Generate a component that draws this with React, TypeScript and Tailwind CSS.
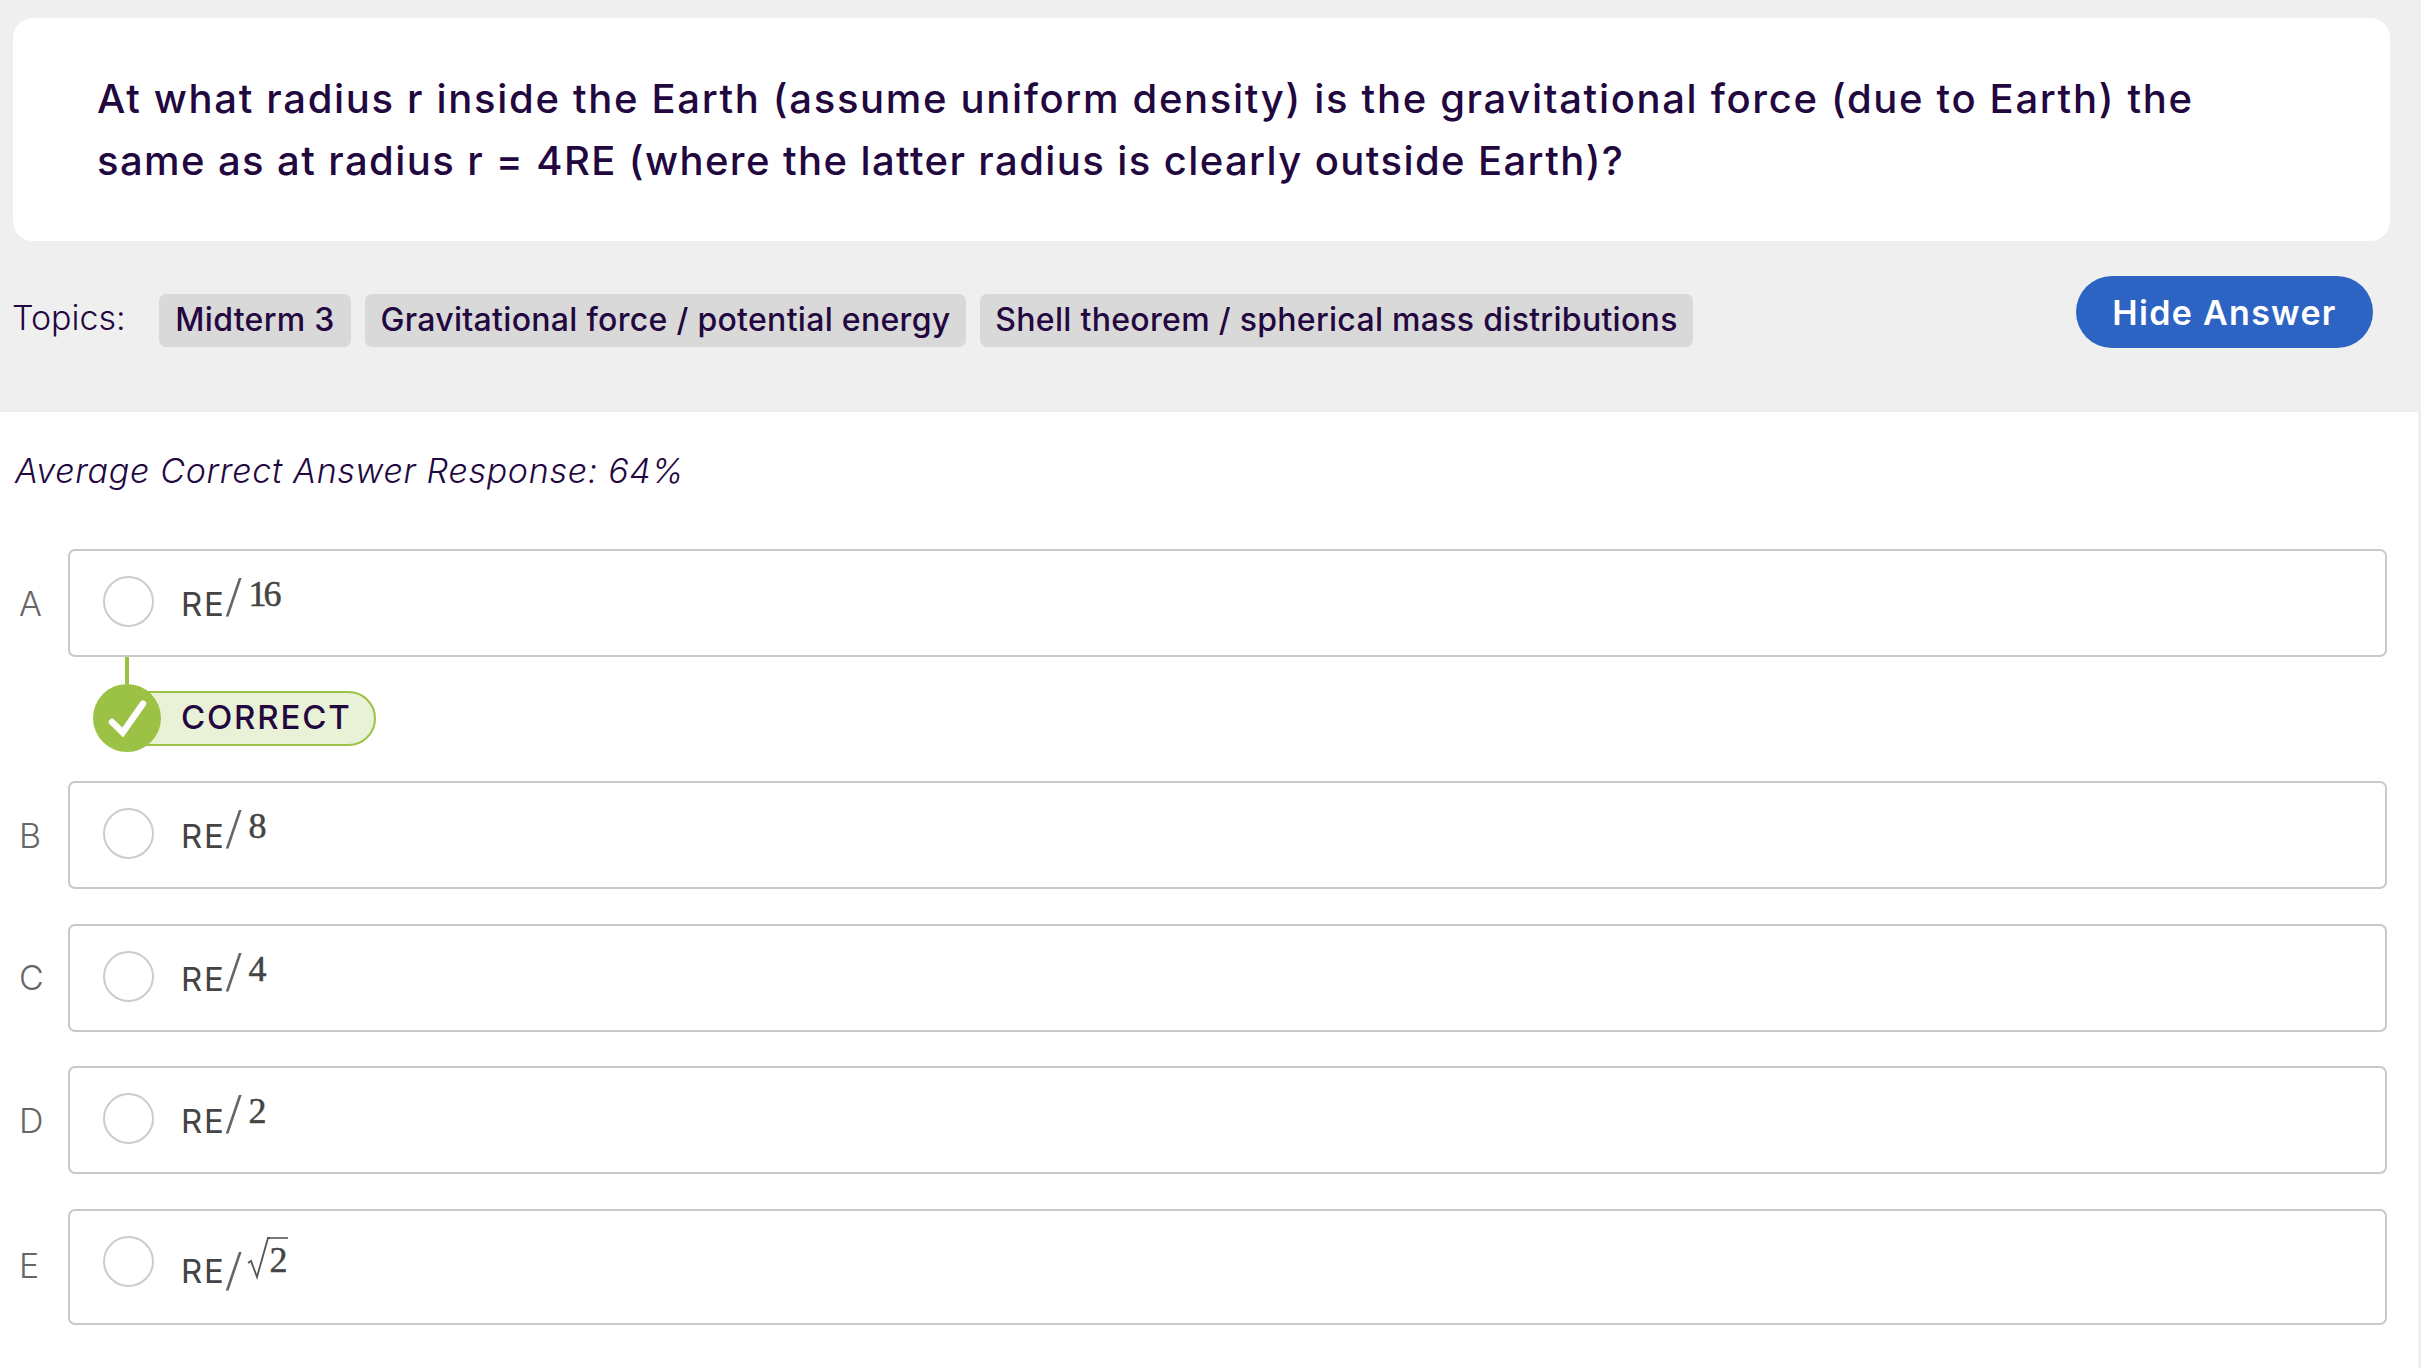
const sans = "font-['Inter','Liberation_Sans',sans-serif]";

const Math = ({ den }: { den: string }) => (
  <div className="-mt-[8px] -ml-[1px] h-[60px] whitespace-nowrap text-[33px] leading-[60px] tracking-[1.8px] text-[#444444]">
    RE
    <span className="font-['Liberation_Serif',serif] text-[57px] leading-none tracking-normal text-[#666666]">/</span>
    <span className="ml-[7px] align-[10px] font-['Liberation_Serif',serif] text-[36px] leading-none tracking-[-3px] text-[#444444] [-webkit-text-stroke:0.5px_#444444]">{den}</span>
  </div>
);

const Root2 = () => (
  <div className="-ml-[1px] flex h-[70px] items-start whitespace-nowrap text-[33px] leading-[70px] tracking-[1.8px] text-[#444444]">
    RE
    <span className="font-['Liberation_Serif',serif] text-[57px] leading-[70px] tracking-normal text-[#666666]">/</span>
    <span className="-mt-[7px] ml-[5px] flex items-start">
      <svg width="23" height="44" viewBox="0 0 23 44" fill="none" className="mt-[8px]">
        <path d="M1 26l3-2 6 16L21 1h2" stroke="#555555" strokeWidth="1.8" />
      </svg>
      <span className="mt-[8px] border-t-2 border-[#777777] font-['Liberation_Serif',serif] text-[36px] leading-[42px] tracking-normal text-[#444444] [-webkit-text-stroke:0.5px_#444444]">2</span>
    </span>
  </div>
);

const Option = ({ letter, children, tall }: { letter: string; children: React.ReactNode; tall?: boolean }) => (
  <div className="flex items-center">
    <div className={`w-[55px] pl-[6px] text-[34px] font-light text-[#666666] ${tall ? '-mt-[4px]' : ''}`}>{letter}</div>
    <div className={`flex flex-1 items-start rounded-[7px] border-2 border-[#c9c9c9] pl-[33px] pt-[25px] ${tall ? 'h-[116px]' : 'h-[108px]'}`}>
      <div className="h-[51px] w-[51px] flex-shrink-0 rounded-full border-2 border-[#cccccc]" />
      <div className="ml-[28px]">{children}</div>
    </div>
  </div>
);

export default function App() {
  return (
    <div className={`h-[1368px] w-full bg-white ${sans}`}>
      {/* Question */}
      <div className="mr-[3px] h-[412px] bg-[#efefef] pl-[13px] pr-[31px] pt-[18px]">
        <div className="flex h-[223px] items-center whitespace-nowrap rounded-[20px] bg-white pl-[84px] text-[40px] font-[450] leading-[62px] tracking-[1.67px] text-[#22083f]">
          <p>
            At what radius r inside the Earth (assume uniform density) is the gravitational force (due to Earth) the<br />
            <span className="tracking-[1.4px]">same as at radius r = 4RE (where the latter radius is clearly outside Earth)?</span>
          </p>
        </div>
        <div className="mt-[35px] flex items-start justify-between pr-[17px]">
          <div className="mt-[18px] flex items-center">
            <span className="-ml-[1px] -mt-[6px] w-[147px] text-[34px] font-light text-[#22083f]">Topics:</span>
            <div className="flex gap-[14px] text-[32px] font-[450] leading-[51px] tracking-[0.3px] text-[#22083f]">
              <span className="h-[53px] w-[192px] rounded-[7px] bg-[#d9d9d9] text-center">Midterm 3</span>
              <span className="h-[53px] w-[601px] rounded-[7px] bg-[#d9d9d9] text-center">Gravitational force / potential energy</span>
              <span className="h-[53px] w-[713px] rounded-[7px] bg-[#d9d9d9] text-center">Shell theorem / spherical mass distributions</span>
            </div>
          </div>
          <button className="h-[72px] w-[297px] rounded-full bg-[#2d64c3] text-[34px] font-semibold tracking-[1.3px] text-white">Hide Answer</button>
        </div>
      </div>

      {/* Answers */}
      <div className="mr-[3px] h-[956px] border-r-[3px] border-[#efefef] bg-white pl-[13px] pr-[31px] pt-[35px]">
        <div className="ml-[2px] text-[34px] font-light italic leading-[48px] tracking-[0.7px] text-[#22083f]">Average Correct Answer Response: 64%</div>
        <div className="mt-[54px] flex flex-col">
          <Option letter="A"><Math den="16" /></Option>
          <div className="h-[124px] pl-[80px]">
            <div className="ml-[32px] h-[27px] w-[4px] bg-[#9bc245]" />
            <div className="flex items-center">
              <div className="z-10 flex h-[68px] w-[68px] items-center justify-center rounded-full bg-[#9bc245]">
                <svg width="40" height="38" viewBox="0 0 40 38" fill="none">
                  <path d="M5 23l10.7 10.5L36 4.7" stroke="white" strokeWidth="6.5" strokeLinecap="round" />
                </svg>
              </div>
              <div className="-ml-[34px] flex h-[55px] items-center rounded-r-full border-2 border-[#9bc245] bg-[#e9f2d7] pl-[52px] pr-[22px] text-[33px] font-[450] tracking-[1.8px] text-[#22083f]">CORRECT</div>
            </div>
          </div>
          <div className="flex flex-col gap-[34.7px]">
            <Option letter="B"><Math den="8" /></Option>
            <Option letter="C"><Math den="4" /></Option>
            <Option letter="D"><Math den="2" /></Option>
            <Option letter="E" tall><Root2 /></Option>
          </div>
        </div>
      </div>
    </div>
  );
}
